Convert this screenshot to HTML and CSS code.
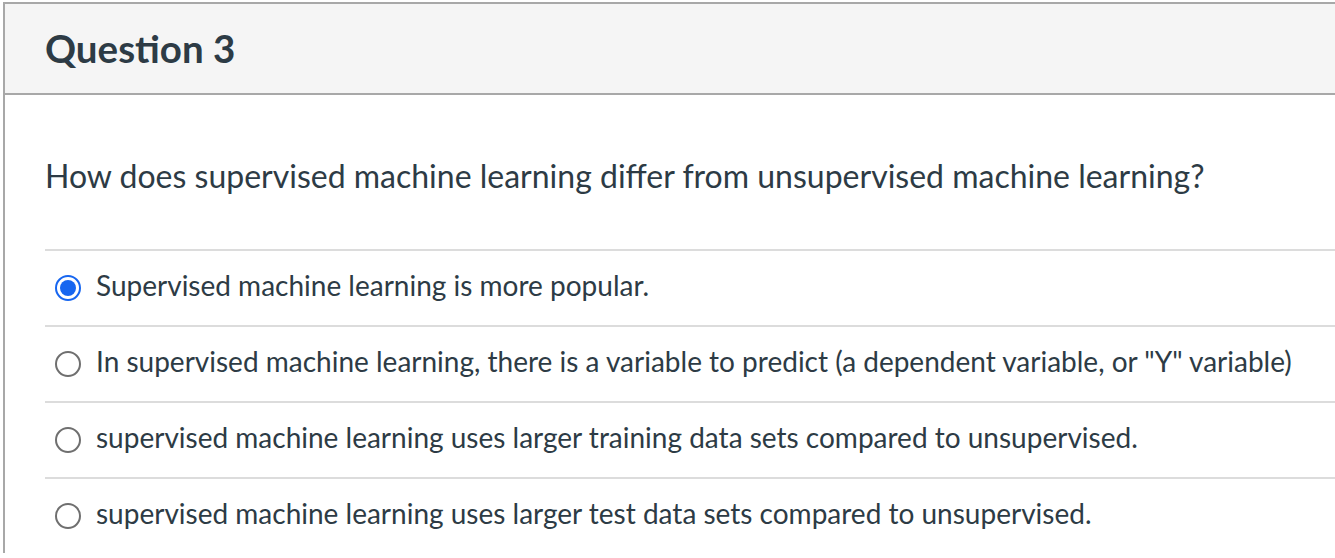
FILE: index.html
```html
<!DOCTYPE html>
<html lang="en">
<head>
<meta charset="utf-8">
<title>Question 3</title>
<link rel="stylesheet" href="styles.css">
</head>
<body>
<div class="question">
  <div class="question-header">
    <h2 class="question-title">Question 3</h2>
  </div>
  <div class="question-body">
    <p class="question-text">How does supervised machine learning differ from unsupervised machine learning?</p>
    <div class="answers">
      <label class="answer">
        <span class="radio checked"></span>
        <span class="answer-text">Supervised machine learning is more popular.</span>
      </label>
      <label class="answer">
        <span class="radio"></span>
        <span class="answer-text">In supervised machine learning, there is a variable to predict (a dependent variable, or "Y" variable)</span>
      </label>
      <label class="answer">
        <span class="radio"></span>
        <span class="answer-text">supervised machine learning uses larger training data sets compared to unsupervised.</span>
      </label>
      <label class="answer">
        <span class="radio"></span>
        <span class="answer-text">supervised machine learning uses larger test data sets compared to unsupervised.</span>
      </label>
    </div>
  </div>
</div>
</body>
</html>
```
FILE: styles.css
```css
html, body {
  margin: 0;
  padding: 0;
  background: #ffffff;
  overflow: hidden;
}

body {
  font-family: Lato, "Open Sans", "Liberation Sans", sans-serif;
  color: #2d3b45;
}

.question {
  margin: 2px 0 0 3px;
  border-top: 2px solid #a8a8a8;
  border-left: 2px solid #a8a8a8;
}

.question-header {
  height: 89px;
  background: #f5f5f5;
  border-bottom: 2px solid #a8a8a8;
  display: flex;
  align-items: center;
  padding-left: 40px;
}

.question-title {
  margin: 0;
  font-size: 38.5px;
  font-weight: 700;
  color: #2d3b45;
  line-height: 1;
}

.question-body {
  padding: 0 0 0 40px;
}

.question-text {
  margin: 0;
  padding: 63px 0 0 0;
  height: 91px;
  font-size: 32px;
  line-height: 36px;
  color: #2d3b45;
}

.answers {
  display: flex;
  flex-direction: column;
}

.answer {
  display: flex;
  align-items: center;
  height: 74px;
  border-top: 2px solid #dcdcdc;
  padding-left: 10px;
}

.radio {
  width: 22px;
  height: 22px;
  border: 2px solid #6f6f6f;
  border-radius: 50%;
  box-sizing: content-box;
  flex: none;
  position: relative;
  background: #fff;
}

.radio.checked {
  border-color: #1766f0;
}

.radio.checked::after {
  content: "";
  position: absolute;
  left: 3px;
  top: 3px;
  width: 16px;
  height: 16px;
  border-radius: 50%;
  background: #1766f0;
}

.answer-text {
  margin-left: 15px;
  padding-bottom: 7px;
  font-size: 28px;
  line-height: 32px;
  color: #2d3b45;
}
```
